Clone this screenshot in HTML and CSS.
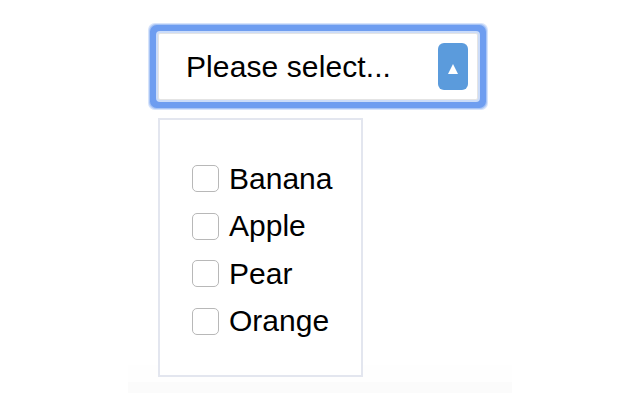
FILE: index.html
```html
<!DOCTYPE html>
<html lang="en">
<head>
<meta charset="utf-8">
<title>Select</title>
<link rel="stylesheet" href="styles.css">
</head>
<body>
<div class="stage">
  <div class="combo">
    <div class="select">
      <span class="label">Please select...</span>
      <span class="toggle"><svg class="arrow" width="12" height="12" viewBox="0 0 12 12"><polygon points="6,1 11,11 1,11" fill="#fff"/></svg></span>
    </div>
    <div class="menu">
      <label class="row"><input type="checkbox" class="box"><span>Banana</span></label>
      <label class="row"><input type="checkbox" class="box"><span>Apple</span></label>
      <label class="row"><input type="checkbox" class="box"><span>Pear</span></label>
      <label class="row"><input type="checkbox" class="box"><span>Orange</span></label>
    </div>
  </div>
  <div class="band"><div class="band-top"></div><div class="band-bottom"></div></div>
</div>
</body>
</html>
```
FILE: styles.css
```css
html, body {
  margin: 0;
  background: #fff;
}
body {
  font-family: "Liberation Sans", Arial, Helvetica, sans-serif;
  color: #000;
}
.stage {
  width: 384px;
  margin: 0 auto;
  padding-top: 33px;
}
.combo {
  position: relative;
  margin-left: 30px;
  width: 320px;
}
.select {
  height: 67px;
  box-sizing: border-box;
  border: 1px solid #e4e4e4;
  border-radius: 2px;
  background: #fff;
  display: flex;
  align-items: center;
  justify-content: space-between;
  padding: 0 9px 0 27px;
  box-shadow: 0 0 0 2px #cbdcf9, 0 0 0 8px #6e9df0, 0 0 0 9px #a9c5f5, 0 0 0 10px #d6e3fb;
}
.label {
  font-size: 30px;
  letter-spacing: 0.1px;
}
.toggle {
  width: 30px;
  height: 47px;
  border-radius: 6px;
  background: #5b9bdc;
  display: flex;
  align-items: center;
  justify-content: center;
}
.arrow {
  margin-top: 5px;
  display: block;
}
.menu {
  position: absolute;
  top: 85px;
  left: 0;
  width: 205px;
  height: 259px;
  box-sizing: border-box;
  border: 2px solid #e3e6ef;
  background: #fff;
  padding: 35px 0 0 32px;
}
.row {
  display: flex;
  align-items: center;
  height: 47.5px;
  font-size: 30px;
}
.box {
  appearance: none;
  -webkit-appearance: none;
  margin: 0 10px 0 0;
  width: 27px;
  height: 27px;
  box-sizing: border-box;
  border: 1px solid #b8b8b8;
  border-radius: 5px;
  background: #fff;
}
.band {
  margin-top: 265px;
}
.band-top {
  height: 17px;
  background: #fefefe;
}
.band-bottom {
  height: 11px;
  background: #fbfbfb;
}
```
